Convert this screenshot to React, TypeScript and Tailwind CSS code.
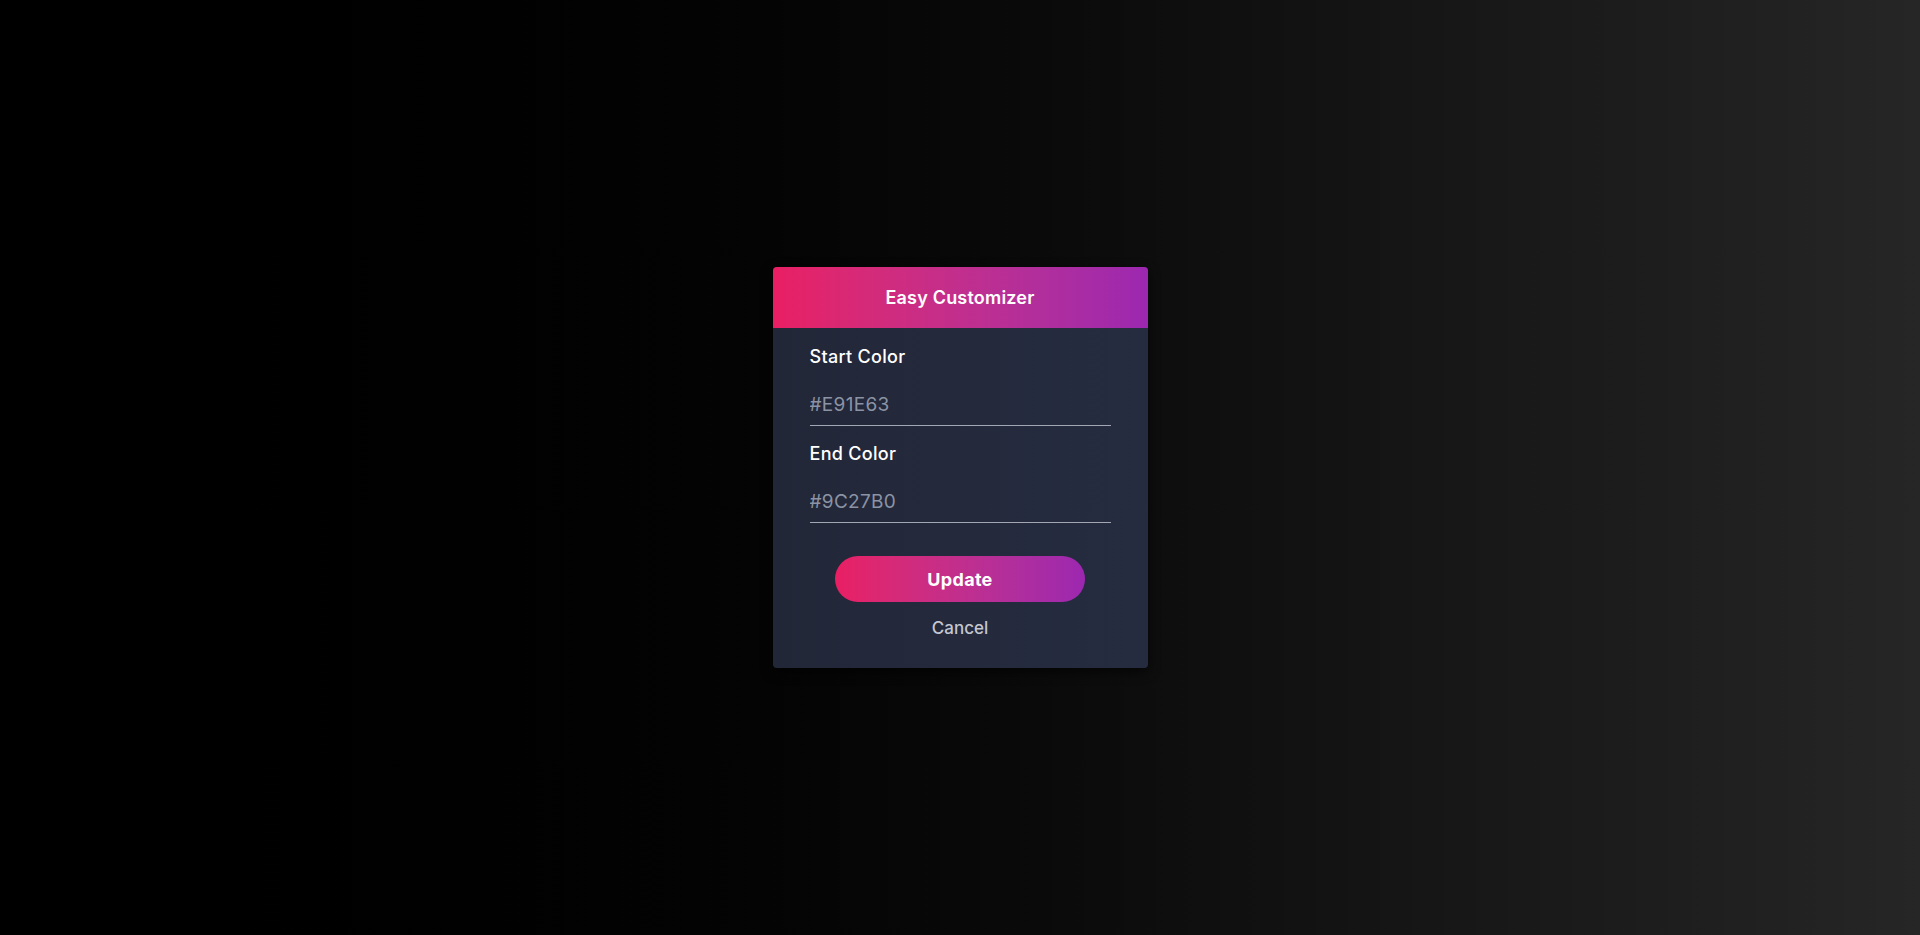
import { useState } from "react"

export default function App() {
  const [startColor, setStartColor] = useState("")
  const [endColor, setEndColor] = useState("")

  return (
    <div
      className="flex h-[935px] w-full items-center justify-center bg-gradient-to-r from-black to-[#262626]"
      style={{ fontFamily: "Inter, 'Noto Sans', sans-serif" }}
    >
      <div className="w-[375px] overflow-hidden rounded-[4px] bg-gradient-to-r from-[#222738] to-[#262c40] shadow-[0_4px_12px_rgba(0,0,0,0.6)]">
        <div className="flex h-[61px] items-center justify-center bg-gradient-to-r from-[#E91E63] to-[#9C27B0]">
          <h2 className="text-[18px] font-semibold tracking-[0.2px] text-white">Easy Customizer</h2>
        </div>
        <div className="flex flex-col px-[37px] pt-[17px] pb-[28px]">
          <label className="h-[24px] text-[18px] font-medium leading-[24px] tracking-[0.3px] text-white">Start Color</label>
          <input
            value={startColor}
            onChange={(e) => setStartColor(e.target.value)}
            placeholder="#E91E63"
            className="mt-[9px] h-[48px] border-b border-[#a3a7b3] bg-transparent pt-[6px] text-[19px] tracking-[0.3px] text-white outline-none placeholder:text-[#8b93a5]"
          />
          <label className="mt-[16px] h-[24px] text-[18px] font-medium leading-[24px] tracking-[0.3px] text-white">End Color</label>
          <input
            value={endColor}
            onChange={(e) => setEndColor(e.target.value)}
            placeholder="#9C27B0"
            className="mt-[9px] h-[48px] border-b border-[#a3a7b3] bg-transparent pt-[6px] text-[19px] tracking-[0.3px] text-white outline-none placeholder:text-[#8b93a5]"
          />
          <button className="mx-auto mt-[33px] h-[46px] w-[250px] rounded-full bg-gradient-to-r from-[#E91E63] to-[#9C27B0] text-[18px] font-bold tracking-[0.3px] text-white">
            Update
          </button>
          <button className="mx-auto mt-[14px] h-[24px] text-[17px] font-medium leading-[24px] text-[#c4c7d0]">
            Cancel
          </button>
        </div>
      </div>
    </div>
  )
}
